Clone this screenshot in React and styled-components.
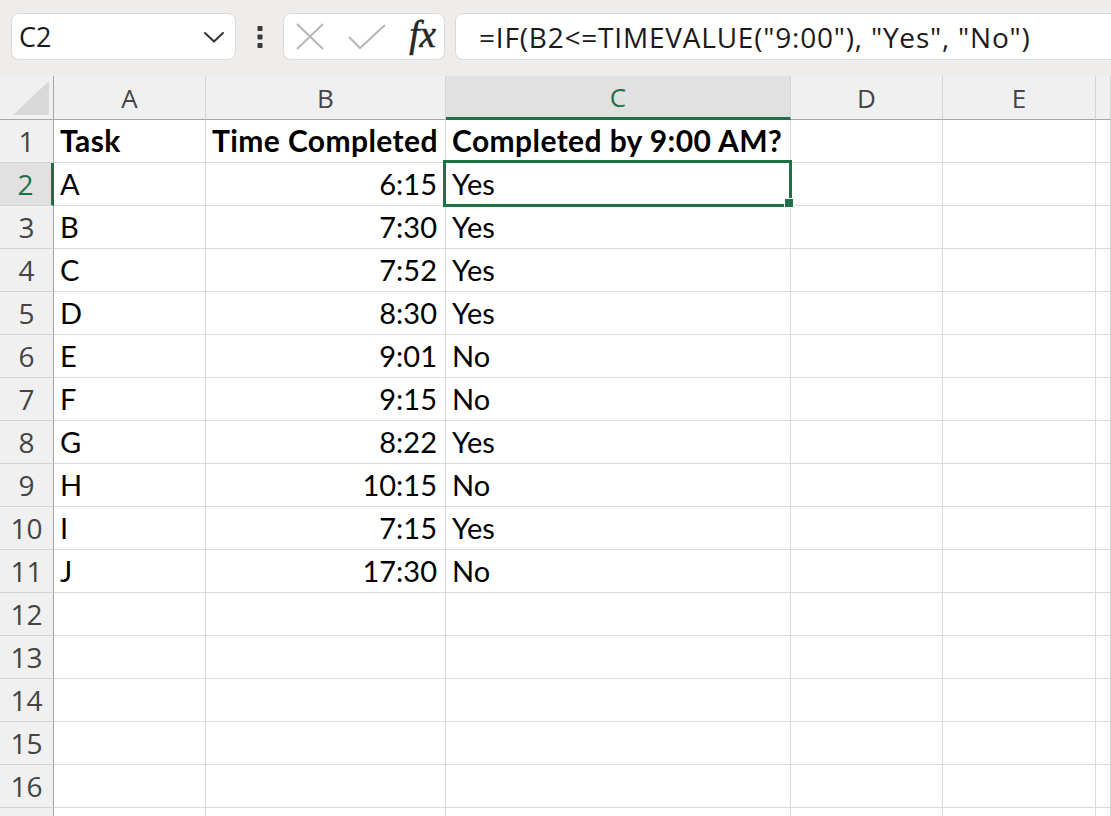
import React from "react";
import styled, { createGlobalStyle, css } from "styled-components";

const GREEN = "#1e7145";

const GlobalStyle = createGlobalStyle`
  html, body {
    margin: 0;
    padding: 0;
    background: #ffffff;
    overflow: hidden;
  }
  body {
    font-family: "Lato", "Liberation Sans", sans-serif;
  }
  * { box-sizing: border-box; }
`;

const Page = styled.div`
  width: 1111px;
  height: 816px;
  overflow: hidden;
  display: flex;
  flex-direction: column;
`;

const Toolbar = styled.div`
  height: 76px;
  flex: none;
  background: #efedeb;
  display: flex;
  align-items: flex-start;
  padding: 13px 0 0 11px;
`;

const Box = styled.div`
  height: 47px;
  background: #ffffff;
  border: 1px solid #dcdad8;
  border-radius: 8px;
  display: flex;
  align-items: center;
`;

const NameBox = styled(Box)`
  width: 225px;
  padding: 0 10px 0 7px;
  justify-content: space-between;
  font-family: "Open Sans", "Noto Sans", sans-serif;
  font-size: 27px;
  color: #1a1a1a;
`;

const DotsArea = styled.div`
  width: 47px;
  height: 47px;
  display: flex;
  align-items: center;
  justify-content: center;
`;

const FxBox = styled(Box)`
  width: 162px;
  padding: 0 8px 0 12px;
  justify-content: space-between;
`;

const FxLabel = styled.span`
  font-family: "Liberation Serif", "DejaVu Serif", serif;
  font-style: italic;
  font-size: 37px;
  line-height: 1;
  color: #262626;
  -webkit-text-stroke: 0.6px #262626;
  margin-top: -4px;
`;

const FormulaBox = styled(Box)`
  flex: 1;
  margin-left: 10px;
  margin-right: -20px;
  padding-left: 23px;
  font-family: "Open Sans", "Noto Sans", sans-serif;
  font-size: 28px;
  letter-spacing: 0.8px;
  color: #1a1a1a;
  white-space: nowrap;
`;

const Sheet = styled.div`
  flex: 1;
  display: grid;
  grid-template-columns: 54px 152px 240px 345px 152px 153px 1fr;
  grid-template-rows: 44px repeat(17, 43px);
  overflow: hidden;
`;

const headerBase = css`
  background: #f0f0f0;
  color: #444444;
  font-family: "Open Sans", "Noto Sans", sans-serif;
  display: flex;
  align-items: center;
  justify-content: center;
`;

const Corner = styled.div`
  ${headerBase};
  border-right: 1px solid #a6a6a6;
  border-bottom: 1px solid #a6a6a6;
  align-items: flex-end;
  justify-content: flex-end;
  padding: 0 4px 4px 0;
`;

const ColHeader = styled.div`
  ${headerBase};
  font-size: 26px;
  border-right: 1px solid #d4d4d4;
  border-bottom: 1px solid #a6a6a6;
  ${(p) =>
    p.$active &&
    css`
      background: #e1e1e1;
      color: ${GREEN};
      border-bottom: 3px solid ${GREEN};
    `}
`;

const RowHeader = styled.div`
  ${headerBase};
  font-size: 28px;
  border-right: 1px solid #a6a6a6;
  border-bottom: 1px solid #d4d4d4;
  ${(p) =>
    p.$active &&
    css`
      background: #e1e1e1;
      color: ${GREEN};
      border-right: 3px solid ${GREEN};
    `}
`;

const Cell = styled.div`
  position: relative;
  border-right: 1px solid #dadada;
  border-bottom: 1px solid #dadada;
  font-family: "Lato", "Liberation Sans", sans-serif;
  font-size: ${(p) => (p.$bold ? "30px" : "29px")};
  letter-spacing: ${(p) => (p.$bold ? "0.4px" : "0")};
  color: #000000;
  font-weight: ${(p) => (p.$bold ? 700 : 400)};
  display: flex;
  align-items: center;
  justify-content: ${(p) => (p.$right ? "flex-end" : "flex-start")};
  padding: 0 8px 2px 6px;
  white-space: nowrap;
  ${(p) =>
    p.$selected &&
    css`
      &::after {
        content: "";
        position: absolute;
        left: -3px;
        top: -3px;
        right: -2px;
        bottom: -2px;
        border: 3px solid ${GREEN};
        pointer-events: none;
        z-index: 2;
      }
    `}
`;

const FillHandle = styled.span`
  position: absolute;
  right: -4px;
  bottom: -3px;
  width: 10px;
  height: 10px;
  background: ${GREEN};
  border: 1px solid #ffffff;
  z-index: 3;
`;

const Chevron = () => (
  <svg width="22" height="14" viewBox="0 0 22 14">
    <path d="M2 3 L11 11.5 L20 3" fill="none" stroke="#333" strokeWidth="2" strokeLinecap="round" strokeLinejoin="round" />
  </svg>
);

const Dots = () => (
  <svg width="6" height="22" viewBox="0 0 6 22">
    <rect x="0.5" y="0" width="5" height="5" rx="0.8" fill="#3a3a3a" />
    <rect x="0.5" y="8.5" width="5" height="5" rx="0.8" fill="#3a3a3a" />
    <rect x="0.5" y="17" width="5" height="5" rx="0.8" fill="#3a3a3a" />
  </svg>
);

const CrossIcon = () => (
  <svg width="28" height="27" viewBox="0 0 28 27">
    <path d="M1 1 L27 26 M27 1 L1 26" fill="none" stroke="#b6b6b6" strokeWidth="2" />
  </svg>
);

const CheckIcon = () => (
  <svg width="38" height="26" viewBox="0 0 38 26">
    <path d="M1 13 L12 24 L37 1" fill="none" stroke="#b6b6b6" strokeWidth="2" />
  </svg>
);

const CornerTriangle = () => (
  <svg width="36" height="34" viewBox="0 0 36 34">
    <path d="M36 0 L36 34 L0 34 Z" fill="#d9d9d9" />
  </svg>
);

const columns = ["A", "B", "C", "D", "E", "F"];

const data = [
  ["Task", "Time Completed", "Completed by 9:00 AM?"],
  ["A", "6:15", "Yes"],
  ["B", "7:30", "Yes"],
  ["C", "7:52", "Yes"],
  ["D", "8:30", "Yes"],
  ["E", "9:01", "No"],
  ["F", "9:15", "No"],
  ["G", "8:22", "Yes"],
  ["H", "10:15", "No"],
  ["I", "7:15", "Yes"],
  ["J", "17:30", "No"],
];

const ROWS = 17;

export default function App() {
  const rows = [];
  for (let r = 1; r <= ROWS; r++) {
    const vals = data[r - 1] || [];
    rows.push(
      <React.Fragment key={r}>
        <RowHeader $active={r === 2}>{r <= 16 ? r : ""}</RowHeader>
        {columns.map((c, ci) => {
          const v = vals[ci] || "";
          const selected = r === 2 && c === "C";
          return (
            <Cell
              key={c}
              $bold={r === 1}
              $right={r > 1 && c === "B"}
              $selected={selected}
            >
              {v}
              {selected && <FillHandle />}
            </Cell>
          );
        })}
      </React.Fragment>
    );
  }

  return (
    <Page>
      <GlobalStyle />
      <Toolbar>
        <NameBox>
          <span>C2</span>
          <Chevron />
        </NameBox>
        <DotsArea>
          <Dots />
        </DotsArea>
        <FxBox>
          <CrossIcon />
          <CheckIcon />
          <FxLabel>fx</FxLabel>
        </FxBox>
        <FormulaBox>=IF(B2&lt;=TIMEVALUE("9:00"), "Yes", "No")</FormulaBox>
      </Toolbar>
      <Sheet>
        <Corner>
          <CornerTriangle />
        </Corner>
        {columns.map((c) => (
          <ColHeader key={c} $active={c === "C"}>
            {c === "F" ? "" : c}
          </ColHeader>
        ))}
        {rows}
      </Sheet>
    </Page>
  );
}
